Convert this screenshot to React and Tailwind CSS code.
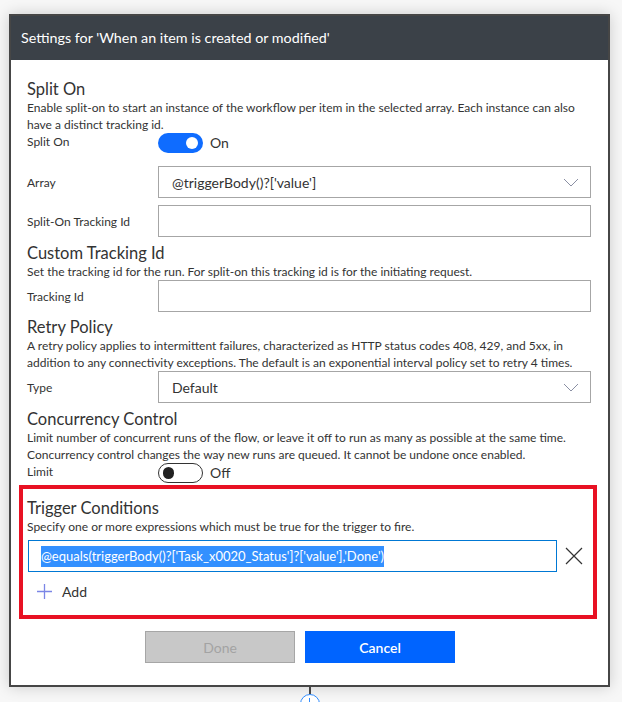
import React from 'react';

const ui = "font-['Segoe_UI','Lato','Liberation_Sans',sans-serif]";

const Toggle = ({ on }) => (on ? (
  <span className="flex h-[20px] w-[45px] items-center justify-end rounded-full bg-[#0f6cff] pr-[5px]">
    <span className="h-[12px] w-[12px] rounded-full bg-white" />
  </span>
) : (
  <span className="flex h-[20px] w-[45px] items-center rounded-full border border-[#333] bg-white pl-[4px]">
    <span className="h-[12px] w-[11px] rounded-full bg-[#222]" />
  </span>
));

const Chevron = () => (
  <svg width="16" height="9" viewBox="0 0 16 9" fill="none">
    <path d="M1 1l7 7 7-7" stroke="#8a8fa3" strokeWidth="1" />
  </svg>
);

const Heading = ({ children, className = '' }) => (
  <h3 className={`text-[16.5px] leading-[19px] font-normal text-[#333] ${className}`}>{children}</h3>
);

const Desc = ({ children }) => (
  <p className="text-[12px] leading-[17px] text-[#333]">{children}</p>
);

const Field = ({ label, children, className = '' }) => (
  <div className={`flex items-center ${className}`}>
    <div className="w-[131px] shrink-0 text-[12px] leading-[17px] text-[#333]">{label}</div>
    {children}
  </div>
);

const Box = ({ value, select }) => (
  <div className="flex h-[32px] flex-1 items-center justify-between border border-[#a6a6a6] bg-white pl-[13px] pr-[11px] text-[14px] text-[#333]">
    <span>{value}</span>
    {select ? <Chevron /> : null}
  </div>
);

const ToggleRow = ({ label, on }) => (
  <div className="flex items-start">
    <div className="w-[131px] shrink-0 text-[12px] leading-[17px] text-[#333]">{label}</div>
    <Toggle on={on} />
    <span className="ml-[7px] text-[14px] leading-[20px] text-[#333]">{on ? 'On' : 'Off'}</span>
  </div>
);

export default function App() {
  return (
    <div className={`min-h-screen overflow-hidden bg-[#f7f7f7] pl-[9px] pt-[14px] ${ui}`}>
      <div className="w-[601px]">
        <div className="border-2 border-[#464646] bg-white shadow-[0_0_14px_rgba(0,0,0,0.18)]">
          <div className="flex h-[44px] items-center bg-[#3b4148] pl-[10px] text-[14.3px] text-white">
            Settings for 'When an item is created or modified'
          </div>

          <div className="pl-[8px] pr-[11px] pt-[20px] pb-[22px]">
            <div className="pl-[8px] pr-[6px]">
              <Heading>Split On</Heading>
              <Desc>
                Enable split-on to start an instance of the workflow per item in the selected array. Each instance can also have a distinct tracking id.
              </Desc>
              <ToggleRow label="Split On" on />
              <Field label="Array" className="mt-[13px]">
                <Box value="@triggerBody()?['value']" select />
              </Field>
              <Field label="Split-On Tracking Id" className="mt-[7px]">
                <Box value="" />
              </Field>

              <Heading className="mt-[7px]">Custom Tracking Id</Heading>
              <Desc>Set the tracking id for the run. For split-on this tracking id is for the initiating request.</Desc>
              <Field label="Tracking Id">
                <Box value="" />
              </Field>

              <Heading className="mt-[6px]">Retry Policy</Heading>
              <Desc>
                A retry policy applies to intermittent failures, characterized as HTTP status codes 408, 429, and 5xx, in addition to any connectivity exceptions. The default is an exponential interval policy set to retry 4 times.
              </Desc>
              <Field label="Type">
                <Box value="Default" select />
              </Field>

              <Heading className="mt-[7px]">Concurrency Control</Heading>
              <Desc>
                Limit number of concurrent runs of the flow, or leave it off to run as many as possible at the same time. Concurrency control changes the way new runs are queued. It cannot be undone once enabled.
              </Desc>
              <ToggleRow label="Limit" on={false} />
            </div>

            <div className="mt-[2px] border-4 border-[#e81123] pb-[13px] pl-[4px] pr-[10px] pt-[10px]">
              <Heading>Trigger Conditions</Heading>
              <Desc>Specify one or more expressions which must be true for the trigger to fire.</Desc>
              <div className="mt-[5px] flex items-center">
                <div className="ml-[1px] flex h-[32px] flex-1 items-center border border-[#0078d4] bg-white pl-[12px] text-[13px]">
                  <span className="bg-[#3390ff] leading-[21px] text-white">
                    @equals(triggerBody()?['Task_x0020_Status']?['value'],'Done')
                  </span>
                </div>
                <svg className="ml-[8px]" width="18" height="18" viewBox="0 0 18 18" fill="none">
                  <path d="M1 1l16 16M17 1L1 17" stroke="#333" strokeWidth="1.2" />
                </svg>
              </div>
              <div className="mt-[8px] flex h-[22px] items-center pl-[10px]">
                <svg width="15" height="15" viewBox="0 0 15 15" fill="none">
                  <path d="M7.5 0v15M0 7.5h15" stroke="#7b86e6" strokeWidth="1.3" />
                </svg>
                <span className="ml-[10px] text-[14px] text-[#333]">Add</span>
              </div>
            </div>

            <div className="mt-[12px] flex gap-[10px] pl-[126px]">
              <button type="button" className="h-[32px] w-[150px] border border-[#a6a6a6] bg-[#c8c8c8] text-[14px] text-[#a3a3a3]">
                Done
              </button>
              <button type="button" className="h-[32px] w-[150px] bg-[#0064ff] text-[14px] font-semibold text-white">
                Cancel
              </button>
            </div>
          </div>
        </div>

        <div className="flex flex-col items-center">
          <div className="h-[7px] w-[2px] bg-[#464646]" />
          <div className="flex h-[20px] w-[20px] justify-center rounded-full border-[1.5px] border-[#2f8cff] bg-white pt-[3px]">
            <div className="h-[6px] w-[1.5px] bg-[#2f8cff]" />
          </div>
        </div>
      </div>
    </div>
  );
}
